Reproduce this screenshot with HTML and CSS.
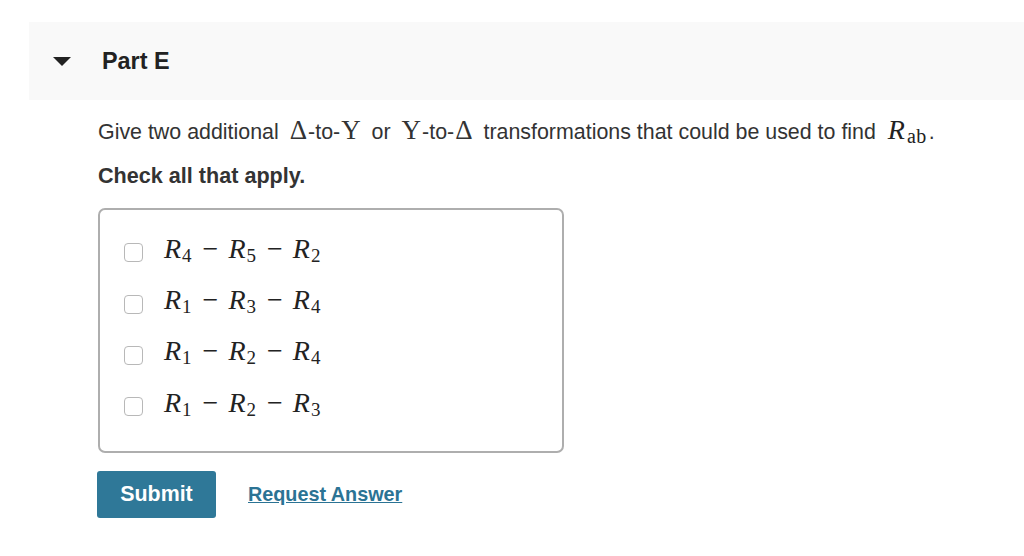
FILE: index.html
```html
<!DOCTYPE html>
<html lang="en">
<head>
<meta charset="utf-8">
<title>Part E</title>
<link rel="stylesheet" href="styles.css">
</head>
<body>
<div class="part-header">
  <span class="caret"></span>
  <h2 class="part-title">Part E</h2>
</div>
<div class="part-body">
  <p class="question">Give two additional <span class="mup lead">Δ</span>-to-<span class="mup trail">Y</span> or <span class="mup lead">Y</span>-to-<span class="mup trail">Δ</span> transformations that could be used to find <span class="qmath"><span class="mi">R</span><span class="msub">ab</span></span>.</p>
  <p class="instruction">Check all that apply.</p>
  <div class="choices">
    <label class="choice"><span class="box"></span><span class="math"><span class="mi">R</span><span class="msub">4</span><span class="mo">−</span><span class="mi">R</span><span class="msub">5</span><span class="mo">−</span><span class="mi">R</span><span class="msub">2</span></span></label>
    <label class="choice"><span class="box"></span><span class="math"><span class="mi">R</span><span class="msub">1</span><span class="mo">−</span><span class="mi">R</span><span class="msub">3</span><span class="mo">−</span><span class="mi">R</span><span class="msub">4</span></span></label>
    <label class="choice"><span class="box"></span><span class="math"><span class="mi">R</span><span class="msub">1</span><span class="mo">−</span><span class="mi">R</span><span class="msub">2</span><span class="mo">−</span><span class="mi">R</span><span class="msub">4</span></span></label>
    <label class="choice"><span class="box"></span><span class="math"><span class="mi">R</span><span class="msub">1</span><span class="mo">−</span><span class="mi">R</span><span class="msub">2</span><span class="mo">−</span><span class="mi">R</span><span class="msub">3</span></span></label>
  </div>
  <div class="actions">
    <button class="submit">Submit</button>
    <a class="request" href="#">Request Answer</a>
  </div>
</div>
</body>
</html>
```
FILE: styles.css
```css
html, body {
  margin: 0;
  padding: 0;
  background: #ffffff;
}
body {
  font-family: "Liberation Sans", Arial, sans-serif;
  color: #333333;
}
.part-header {
  margin: 22px 0 0 29px;
  height: 78px;
  background: #f9f9f9;
  display: flex;
  align-items: center;
  padding-left: 24px;
}
.caret {
  width: 0;
  height: 0;
  border-left: 9px solid transparent;
  border-right: 9px solid transparent;
  border-top: 9px solid #222222;
  margin-top: 1px;
}
.part-title {
  margin: 0 0 0 31px;
  font-size: 23.4px;
  font-weight: bold;
  color: #222222;
  line-height: 30px;
}
.part-body {
  padding-left: 98px;
}
.question {
  margin: 17px 0 0 0;
  font-size: 21.4px;
  line-height: 30px;
}
.mup {
  font-family: "Liberation Serif", "Times New Roman", serif;
  font-size: 27px;
  line-height: 0;
  padding: 0 1px;
}
.mup.lead {
  margin-left: 4px;
}
.mup.trail {
  margin-right: 4px;
}
.qmath {
  padding: 0 2px 0 6px;
  color: #222222;
}
.qmath .mi {
  font-size: 28px;
  margin-right: 1px;
}
.qmath .msub {
  font-size: 20px;
  letter-spacing: 0.5px;
}
.mi {
  font-family: "Liberation Serif", "Times New Roman", serif;
  font-style: italic;
  font-size: 28px;
  line-height: 0;
}
.msub {
  font-family: "Liberation Serif", "Times New Roman", serif;
  font-size: 19px;
  vertical-align: -4px;
  line-height: 0;
  margin-left: 1px;
}
.instruction {
  margin: 14px 0 0 0;
  font-size: 21.6px;
  line-height: 30px;
  font-weight: bold;
}
.choices {
  margin-top: 17px;
  border: 2px solid #aeaeae;
  border-radius: 7px;
  padding: 17px 0 0 24px;
  box-sizing: content-box;
  width: 438px;
  height: 224px;
  display: flex;
  flex-direction: column;
}
.choice {
  display: flex;
  align-items: center;
  height: 51.4px;
}
.box {
  width: 17px;
  height: 17px;
  border: 1.5px solid #b8b8b8;
  border-radius: 4px;
  background: #fff;
  margin-right: 21px;
  flex: none;
}
.math {
  color: #222222;
  line-height: 30px;
}
.mo {
  font-family: "Liberation Serif", "Times New Roman", serif;
  font-size: 28px;
  line-height: 0;
  margin: 0 10px 0 11px;
}
.actions {
  margin-top: 18px;
  display: flex;
  align-items: center;
}
.submit {
  width: 119px;
  height: 47px;
  background: #2f7898;
  border: none;
  border-radius: 3px;
  color: #ffffff;
  font-family: "Liberation Sans", Arial, sans-serif;
  font-size: 21.4px;
  font-weight: bold;
  padding: 0;
  margin-left: -1px;
}
.request {
  margin-left: 32px;
  color: #2b7394;
  font-size: 19.8px;
  font-weight: bold;
  text-decoration: underline;
}
```
